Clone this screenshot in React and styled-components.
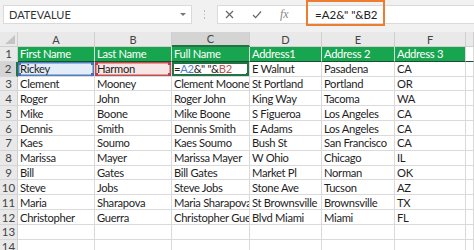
import React from "react";
import styled, { createGlobalStyle } from "styled-components";

const Global = createGlobalStyle`
  html, body { margin: 0; padding: 0; background: #ffffff; overflow: hidden; }
  body { width: 474px; height: 250px; font-family: Lato, "Open Sans", sans-serif; }
`;

const Page = styled.div`
  width: 474px;
  height: 250px;
  overflow: hidden;
  background: #ffffff;
`;

const Toolbar = styled.div`
  height: 32px;
  box-sizing: border-box;
  background: #f1f1f1;
  display: flex;
  align-items: flex-start;
  padding: 5px 0 0 3px;
`;

const NameBox = styled.div`
  width: 189px;
  height: 19px;
  box-sizing: border-box;
  background: #fff;
  border: 1px solid #dadada;
  display: flex;
  align-items: center;
  justify-content: space-between;
  padding: 0 5px 0 5px;
  font-size: 11px;
  color: #333;
`;

const Arrow = styled.span`
  width: 0;
  height: 0;
  border-left: 3px solid transparent;
  border-right: 3px solid transparent;
  border-top: 3px solid #777;
`;

const Dots = styled.div`
  width: 25px;
  height: 19px;
  display: flex;
  flex-direction: column;
  align-items: center;
  justify-content: center;
  gap: 2px;
  span { width: 1.5px; height: 1.5px; background: #bbb; }
`;

const FormulaStrip = styled.div`
  flex: 1;
  height: 19px;
  display: flex;
  align-items: center;
  background: #fff;
  border: 1px solid #dadada;
  border-right: none;
  box-sizing: border-box;
`;

const Buttons = styled.div`
  width: 81px;
  display: flex;
  align-items: center;
  padding-left: 7px;
  gap: 18px;
  color: #777;
`;

const Fx = styled.span`
  font-family: "Liberation Serif", serif;
  font-style: italic;
  font-size: 12px;
  color: #888;
`;

const FormulaField = styled.div`
  position: relative;
  flex: 1;
  height: 100%;
  display: flex;
  align-items: center;
  padding-left: 9px;
  font-size: 11.5px;
  color: #222;
`;

const Annotation = styled.div`
  position: absolute;
  left: 0;
  top: -6px;
  width: 79px;
  height: 26px;
  box-sizing: border-box;
  border: 2px solid #ed7d31;
`;

const Grid = styled.div`
  display: grid;
  grid-template-columns: 18px 77px 77px 78px 72px 73px 71px 1fr;
  grid-template-rows: 15px;
  grid-auto-rows: 14.83px;
  font-size: 11.2px;
  letter-spacing: -0.3px;
  color: #1e1e1e;
`;

const Corner = styled.div`
  background: #e9e9e9;
  border-right: 1px solid #cfcfcf;
  border-bottom: 1px solid #cfcfcf;
  position: relative;
  &::after {
    content: "";
    position: absolute;
    right: 2px;
    bottom: 2px;
    width: 0;
    height: 0;
    border-left: 10px solid transparent;
    border-bottom: 9px solid #c4c4c4;
  }
`;

const ColHead = styled.div`
  background: ${(p) => (p.$sel ? "#d4d4d4" : "#e9e9e9")};
  border-right: 1px solid #cfcfcf;
  border-bottom: ${(p) => (p.$sel ? "2px solid #217346" : "1px solid #cfcfcf")};
  box-sizing: border-box;
  display: flex;
  align-items: center;
  justify-content: center;
  font-size: 11px;
  letter-spacing: 0;
  color: #444;
`;

const RowHead = styled.div`
  background: ${(p) => (p.$sel ? "#d4d4d4" : "#e9e9e9")};
  border-right: ${(p) => (p.$sel ? "2px solid #217346" : "1px solid #cfcfcf")};
  border-bottom: 1px solid #d6d6d6;
  box-sizing: border-box;
  display: flex;
  align-items: center;
  justify-content: center;
  font-size: 11.5px;
  letter-spacing: 0;
  color: #444;
`;

const variants = {
  plain: { bg: "#fff", ring: "none", color: "#1e1e1e" },
  header: { bg: "#17a64f", ring: "none", color: "#ffffff" },
  refA: { bg: "#e4ecf7", ring: "inset 0 0 0 1.5px #4f7fc0", color: "#1e1e1e" },
  refB: { bg: "#f8e6e6", ring: "inset 0 0 0 1.5px #c0504d", color: "#1e1e1e" },
  active: { bg: "#fff", ring: "inset 0 0 0 2px #217346", color: "#1e1e1e" },
};

const Cell = styled.div`
  position: relative;
  box-sizing: border-box;
  background: ${(p) => variants[p.$v].bg};
  box-shadow: ${(p) => variants[p.$v].ring};
  color: ${(p) => variants[p.$v].color};
  border-right: 1px solid ${(p) => (p.$v === "header" ? "#d9d9d9" : "#dadada")};
  border-bottom: 1px solid ${(p) => (p.$top ? "#1b4d2e" : "#dadada")};
  padding-left: 2px;
  white-space: nowrap;
  overflow: hidden;
  display: flex;
  align-items: center;
`;

const Handle = styled.span`
  position: absolute;
  width: 4px;
  height: 4px;
  background: ${(p) => p.$c};
  ${(p) => (p.$t ? "top: -1px;" : "bottom: -1px;")}
  ${(p) => (p.$l ? "left: -1px;" : "right: -1px;")}
  z-index: 2;
`;

const Ref = styled.span`
  color: ${(p) => p.$c};
`;

const headers = ["First Name", "Last Name", "Full Name", "Address1", "Address 2", "Address 3"];

const data = [
  ["Rickey", "Harmon", null, "E Walnut", "Pasadena", "CA"],
  ["Clement", "Mooney", "Clement Mooney", "St Portland", "Portland", "OR"],
  ["Roger", "John", "Roger John", "King Way", "Tacoma", "WA"],
  ["Mike", "Boone", "Mike Boone", "S Figueroa", "Los Angeles", "CA"],
  ["Dennis", "Smith", "Dennis Smith", "E Adams", "Los Angeles", "CA"],
  ["Kaes", "Soumo", "Kaes Soumo", "Bush St", "San Francisco", "CA"],
  ["Marissa", "Mayer", "Marissa Mayer", "W Ohio", "Chicago", "IL"],
  ["Bill", "Gates", "Bill Gates", "Market Pl", "Norman", "OK"],
  ["Steve", "Jobs", "Steve Jobs", "Stone Ave", "Tucson", "AZ"],
  ["Maria", "Sharapova", "Maria Sharapova", "St Brownsville", "Brownsville", "TX"],
  ["Christopher", "Guerra", "Christopher Guerra", "Blvd Miami", "Miami", "FL"],
];

const XIcon = () => (
  <svg width="9" height="9" viewBox="0 0 9 9">
    <path d="M1 1 L8 8 M8 1 L1 8" stroke="#666" strokeWidth="1.2" />
  </svg>
);

const CheckIcon = () => (
  <svg width="10" height="9" viewBox="0 0 10 9">
    <path d="M1 5 L3.6 7.6 L9 1.5" stroke="#666" strokeWidth="1.2" fill="none" />
  </svg>
);

export default function App() {
  return (
    <Page>
      <Global />
      <Toolbar>
        <NameBox>
          DATEVALUE
          <Arrow />
        </NameBox>
        <Dots>
          <span />
          <span />
          <span />
        </Dots>
        <FormulaStrip>
          <Buttons>
            <XIcon />
            <CheckIcon />
            <Fx>fx</Fx>
          </Buttons>
          <FormulaField>
            <Annotation />
            =A2&amp;" "&amp;B2
          </FormulaField>
        </FormulaStrip>
      </Toolbar>
      <Grid>
        <Corner />
        {["A", "B", "C", "D", "E", "F", ""].map((c, i) => (
          <ColHead key={i} $sel={c === "C"}>
            {c}
          </ColHead>
        ))}
        <RowHead>1</RowHead>
        {headers.map((h) => (
          <Cell key={h} $v="header" $top>
            {h}
          </Cell>
        ))}
        <Cell $v="plain" $top />
        {data.map((row, r) => (
          <React.Fragment key={r}>
            <RowHead $sel={r === 0}>{r + 2}</RowHead>
            {row.map((val, c) => {
              if (r === 0 && c === 0)
                return (
                  <Cell key={c} $v="refA">
                    {val}
                    <Handle $c="#3f6fb5" $t $l />
                    <Handle $c="#3f6fb5" $l />
                    <Handle $c="#3f6fb5" $t />
                    <Handle $c="#3f6fb5" />
                  </Cell>
                );
              if (r === 0 && c === 1)
                return (
                  <Cell key={c} $v="refB">
                    {val}
                    <Handle $c="#c0385a" $t $l />
                    <Handle $c="#c0385a" $l />
                    <Handle $c="#c0385a" $t />
                    <Handle $c="#c0385a" />
                  </Cell>
                );
              if (r === 0 && c === 2)
                return (
                  <Cell key={c} $v="active">
                    =<Ref $c="#4f7fc0">A2</Ref>&amp;" "&amp;<Ref $c="#c0504d">B2</Ref>
                    <Handle $c="#217346" />
                  </Cell>
                );
              return (
                <Cell key={c} $v="plain">
                  {val}
                </Cell>
              );
            })}
            <Cell $v="plain" />
          </React.Fragment>
        ))}
        {[13, 14].map((n) => (
          <React.Fragment key={n}>
            <RowHead>{n}</RowHead>
            {[0, 1, 2, 3, 4, 5, 6].map((c) => (
              <Cell key={c} $v="plain" />
            ))}
          </React.Fragment>
        ))}
      </Grid>
    </Page>
  );
}
